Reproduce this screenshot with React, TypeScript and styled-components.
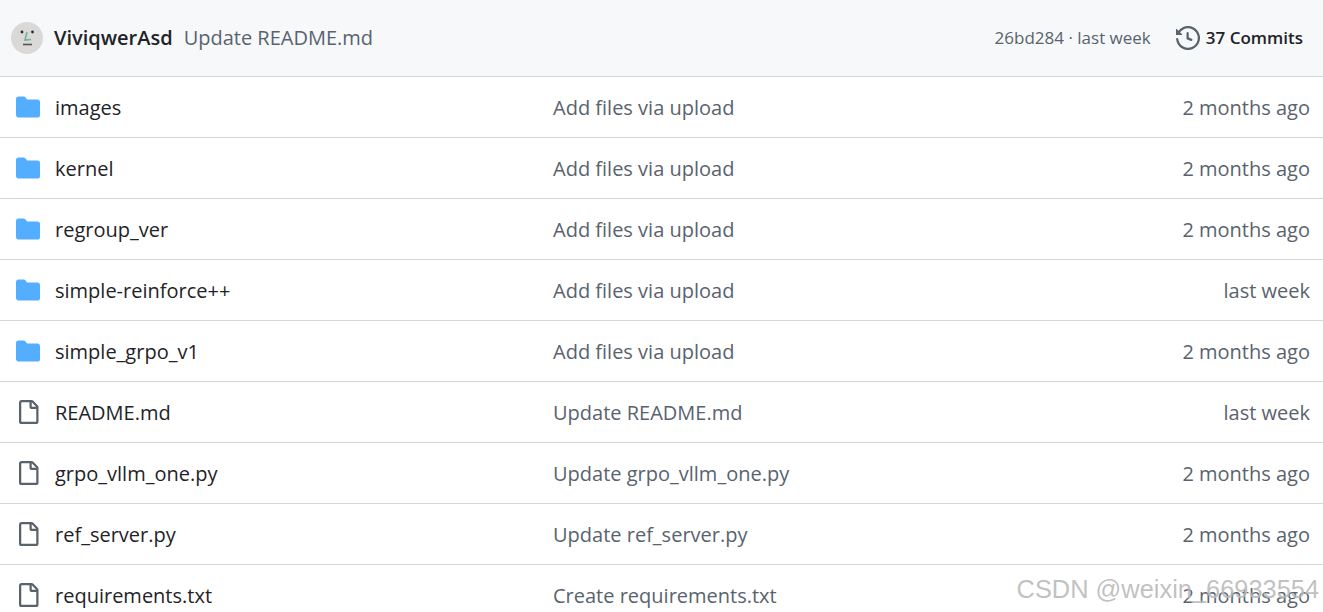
import styled, { createGlobalStyle } from 'styled-components';

const rows = [
  { name: 'images', kind: 'dir', message: 'Add files via upload', age: '2 months ago' },
  { name: 'kernel', kind: 'dir', message: 'Add files via upload', age: '2 months ago' },
  { name: 'regroup_ver', kind: 'dir', message: 'Add files via upload', age: '2 months ago' },
  { name: 'simple-reinforce++', kind: 'dir', message: 'Add files via upload', age: 'last week' },
  { name: 'simple_grpo_v1', kind: 'dir', message: 'Add files via upload', age: '2 months ago' },
  { name: 'README.md', kind: 'file', message: 'Update README.md', age: 'last week' },
  { name: 'grpo_vllm_one.py', kind: 'file', message: 'Update grpo_vllm_one.py', age: '2 months ago' },
  { name: 'ref_server.py', kind: 'file', message: 'Update ref_server.py', age: '2 months ago' },
  { name: 'requirements.txt', kind: 'file', message: 'Create requirements.txt', age: '2 months ago' },
];

const FolderIcon = () => (
  <svg width="24" height="24" viewBox="0 0 16 16" fill="currentColor">
    <path d="M1.75 1A1.75 1.75 0 0 0 0 2.75v10.5C0 14.216.784 15 1.75 15h12.5A1.75 1.75 0 0 0 16 13.25v-8.5A1.75 1.75 0 0 0 14.25 3H7.5a.25.25 0 0 1-.2-.1l-.9-1.2C6.07 1.26 5.55 1 5 1H1.75Z" />
  </svg>
);

const FileIcon = () => (
  <svg width="24" height="24" viewBox="0 0 16 16" fill="currentColor">
    <path d="M2 1.75C2 .784 2.784 0 3.75 0h6.586c.464 0 .909.184 1.237.513l2.914 2.914c.329.328.513.773.513 1.237v9.586A1.75 1.75 0 0 1 13.25 16h-9.5A1.75 1.75 0 0 1 2 14.25Zm1.75-.25a.25.25 0 0 0-.25.25v12.5c0 .138.112.25.25.25h9.5a.25.25 0 0 0 .25-.25V6h-2.75A1.75 1.75 0 0 1 9 4.25V1.5Zm6.75.062V4.25c0 .138.112.25.25.25h2.688l-.011-.013-2.914-2.914-.013-.011Z" />
  </svg>
);

const HistoryIcon = () => (
  <svg width="24" height="24" viewBox="0 0 16 16" fill="#59636e">
    <path d="m.427 1.927 1.215 1.215a8.002 8.002 0 1 1-1.6 5.685.75.75 0 1 1 1.493-.154 6.5 6.5 0 1 0 1.18-4.458l1.358 1.358A.25.25 0 0 1 3.896 6H.25A.25.25 0 0 1 0 5.75V2.104a.25.25 0 0 1 .427-.177ZM7.75 4a.75.75 0 0 1 .75.75v2.992l2.028.812a.75.75 0 0 1-.557 1.392l-2.5-1A.751.751 0 0 1 7 8.25v-3.5A.75.75 0 0 1 7.75 4Z" />
  </svg>
);

const Avatar = () => (
  <AvatarWrap>
    <svg width="32" height="32" viewBox="0 0 32 32">
      <circle cx="16" cy="16" r="16" fill="#dbd9d8" />
      <circle cx="11" cy="10" r="1.4" fill="#2b2b2b" />
      <circle cx="21.5" cy="10" r="1.4" fill="#2b2b2b" />
      <path d="M16 10 L14 18 L20 17.5" fill="none" stroke="#6fb39a" strokeWidth="1.6" />
      <path d="M12 22.5 H21" stroke="#555" strokeWidth="1.6" />
    </svg>
  </AvatarWrap>
);

const App = () => {
  return (
    <Page>
      <GlobalStyle />
      <Header>
        <Avatar />
        <Author>ViviqwerAsd</Author>
        <CommitTitle>Update README.md</CommitTitle>
        <CommitMeta>26bd284 · last week</CommitMeta>
        <Commits>
          <HistoryIcon />
          <span>37 Commits</span>
        </Commits>
      </Header>
      {rows.map((row) => (
        <Row key={row.name}>
          <IconCell $dir={row.kind === 'dir'}>
            {row.kind === 'dir' ? <FolderIcon /> : <FileIcon />}
          </IconCell>
          <Name>{row.name}</Name>
          <Message>{row.message}</Message>
          <Age>{row.age}</Age>
        </Row>
      ))}
      <Watermark>CSDN @weixin_66933554</Watermark>
    </Page>
  );
};

const GlobalStyle = createGlobalStyle`
  html, body {
    margin: 0;
    height: 100%;
    overflow: hidden;
    background: #fff;
  }
`;

const Page = styled.div`
  position: relative;
  width: 1323px;
  height: 612px;
  overflow: hidden;
  font-family: "Open Sans", "Noto Sans", sans-serif;
  font-size: 20px;
  color: #1f2328;
`;

const Header = styled.div`
  height: 76px;
  box-sizing: content-box;
  display: flex;
  align-items: center;
  padding: 0 20px 0 11px;
  background: #f6f8fa;
  border-bottom: 1px solid #d0d7de;
`;

const AvatarWrap = styled.div`
  display: flex;
  width: 32px;
  height: 32px;
  margin-right: 11px;
`;

const Author = styled.span`
  font-weight: 600;
  margin: -2px 11px 0 0;
`;

const CommitTitle = styled.span`
  color: #59636e;
  flex: 1;
  margin-top: -2px;
`;

const CommitMeta = styled.span`
  color: #59636e;
  font-size: 17px;
  margin: -2px 25px 0 0;
`;

const Commits = styled.span`
  display: flex;
  align-items: center;
  gap: 6px;
  font-size: 17px;
  font-weight: 600;
  margin-top: -1px;
`;

const Row = styled.div`
  height: 60px;
  display: grid;
  grid-template-columns: 24px 498px 1fr auto;
  align-items: center;
  padding: 0 13px 0 16px;
  border-bottom: 1px solid #d0d7de;
`;

const IconCell = styled.div<{ $dir: boolean }>`
  display: flex;
  color: ${(p) => (p.$dir ? '#54aeff' : '#59636e')};
`;

const Name = styled.span`
  margin-left: 15px;
`;

const Message = styled.span`
  color: #59636e;
  margin-left: 15px;
`;

const Age = styled.span`
  color: #59636e;
`;

const Watermark = styled.div`
  position: absolute;
  right: 4px;
  top: 575px;
  font-family: "Liberation Sans", Arial, sans-serif;
  font-size: 25.4px;
  color: rgba(140, 140, 140, 0.55);
  text-shadow: 0 0 1px rgba(255, 255, 255, 0.8);
`;

export default App;
